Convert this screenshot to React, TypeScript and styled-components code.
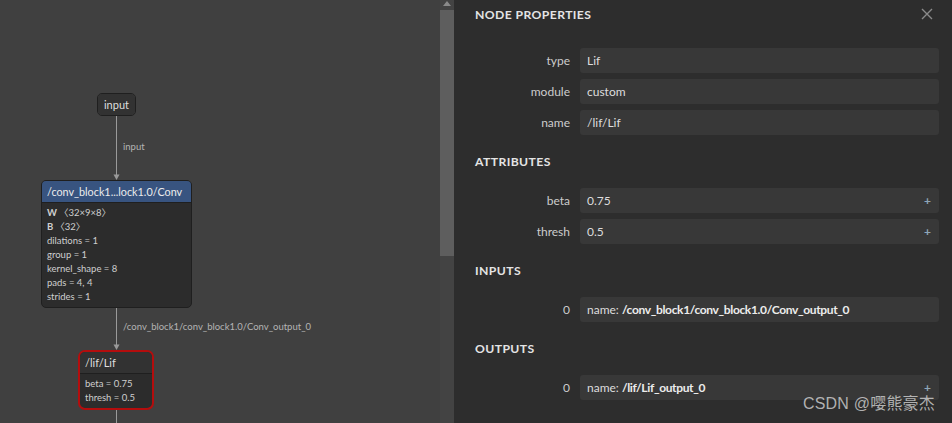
import React from "react";
import styled, { createGlobalStyle } from "styled-components";

const Global = createGlobalStyle`
  html, body { margin: 0; padding: 0; background: #2d2d2d; }
  body { font-family: Lato, "Noto Sans CJK SC", sans-serif; }
  * { box-sizing: border-box; }
`;

const Root = styled.div`
  display: flex;
  width: 952px;
  height: 423px;
  overflow: hidden;
  position: relative;
`;

const Canvas = styled.div`
  position: relative;
  flex: 0 0 440px;
  height: 100%;
  background: #404040;
`;

const Edges = styled.svg`
  position: absolute;
  left: 0;
  top: 0;
`;

const Node = styled.div<{ $x: number; $y: number; $w: number; $selected?: boolean }>`
  position: absolute;
  left: ${(p) => p.$x}px;
  top: ${(p) => p.$y}px;
  width: ${(p) => p.$w}px;
  border: ${(p) => (p.$selected ? "2px solid #b40d0d" : "1px solid #1f1f1f")};
  border-radius: ${(p) => (p.$selected ? 7 : 5)}px;
  overflow: hidden;
  background: #2c2c2c;
  color: #dcdcdc;
`;

const NodeHeader = styled.div<{ $kind: "layer" | "plain" | "input" }>`
  height: ${(p) => (p.$kind === "input" ? 21 : 22)}px;
  display: flex;
  align-items: center;
  justify-content: ${(p) => (p.$kind === "input" ? "center" : "flex-start")};
  padding: 0 ${(p) => (p.$kind === "input" ? 0 : 5)}px;
  font-size: ${(p) => (p.$kind === "layer" ? 10.8 : 11)}px;
  background: ${(p) => (p.$kind === "layer" ? "#385480" : "#323232")};
  color: ${(p) => (p.$kind === "layer" ? "#ececec" : "#dedede")};
  border-bottom: ${(p) => (p.$kind === "input" ? "none" : "1px solid #1f1f1f")};
  white-space: nowrap;
`;

const NodeBody = styled.div`
  display: flex;
  flex-direction: column;
  padding: 3px 5px 3px 5px;
`;

const NodeAttr = styled.div`
  height: 14px;
  line-height: 14px;
  font-size: 9.5px;
  color: #cfcfcf;
  white-space: nowrap;
`;

const AttrKey = styled.b`
  font-weight: 700;
  margin-right: 2px;
`;

const EdgeLabel = styled.div<{ $x: number; $y: number }>`
  position: absolute;
  left: ${(p) => p.$x}px;
  top: ${(p) => p.$y}px;
  font-size: 9.5px;
  color: #b4b4b4;
  white-space: nowrap;
`;

const ScrollTrack = styled.div`
  flex: 0 0 14px;
  height: 100%;
  background: #434343;
  display: flex;
  flex-direction: column;
  align-items: stretch;
`;

const ScrollArrow = styled.div`
  height: 10px;
  display: flex;
  justify-content: center;
  padding-top: 1px;
`;

const ScrollThumb = styled.div`
  height: 246px;
  background: #5e5e5e;
`;

const Panel = styled.div`
  flex: 1;
  height: 100%;
  background: #2d2d2d;
  padding: 0 13px 0 21px;
  display: flex;
  flex-direction: column;
  color: #d6d6d6;
`;

const TitleBar = styled.div`
  height: 28px;
  display: flex;
  align-items: center;
  justify-content: space-between;
  margin-bottom: 20px;
`;

const Heading = styled.div<{ $gapTop?: number; $gapBottom?: number }>`
  height: 20px;
  display: flex;
  align-items: center;
  font-size: 12.2px;
  font-weight: 700;
  color: #e4e4e4;
  letter-spacing: 0.4px;
  margin-top: ${(p) => p.$gapTop ?? 16}px;
  margin-bottom: ${(p) => p.$gapBottom ?? 17}px;
`;

const Close = styled.button`
  background: none;
  border: none;
  padding: 0;
  margin-right: 6px;
  display: flex;
  cursor: pointer;
`;

const Rows = styled.div`
  display: flex;
  flex-direction: column;
  gap: 6px;
`;

const Row = styled.div`
  display: grid;
  grid-template-columns: 95px 1fr;
  column-gap: 10px;
  align-items: center;
`;

const Label = styled.div`
  text-align: right;
  font-size: 12px;
  color: #cccccc;
`;

const Value = styled.div`
  height: 25px;
  background: #383838;
  border-radius: 3px;
  display: flex;
  align-items: center;
  justify-content: space-between;
  padding: 0 8px 0 7px;
  font-size: 12px;
  color: #dddddd;
  white-space: nowrap;
`;

const Strong = styled.b`
  font-weight: 700;
  color: #ececec;
  letter-spacing: -0.35px;
`;

const Plus = styled.span`
  font-size: 12px;
  color: #8fa6b8;
  font-weight: 700;
`;

const Watermark = styled.div`
  position: absolute;
  right: 17px;
  bottom: 9px;
  font-family: "Liberation Sans", "Noto Sans CJK SC", sans-serif;
  font-size: 16px;
  color: rgba(215, 215, 215, 0.78);
  letter-spacing: 0.2px;
`;

type Prop = { label: string; value: React.ReactNode; expand?: boolean };

const PropRow = ({ label, value, expand }: Prop) => (
  <Row>
    <Label>{label}</Label>
    <Value>
      <span>{value}</span>
      {expand && <Plus>+</Plus>}
    </Value>
  </Row>
);

export default function App() {
  return (
    <Root>
      <Global />
      <Canvas>
        <Edges width={440} height={423}>
          <g stroke="#9a9a9a" strokeWidth={1} fill="none">
            <line x1={116.5} y1={116} x2={116.5} y2={176} />
            <line x1={116.5} y1={307} x2={116.5} y2={346} />
            <line x1={116.5} y1={408} x2={116.5} y2={423} />
          </g>
          <g fill="#9a9a9a">
            <path d="M113.5 174.5 L119.5 174.5 L116.5 180 Z" />
            <path d="M113.5 344.5 L119.5 344.5 L116.5 350 Z" />
          </g>
        </Edges>

        <Node $x={97} $y={93} $w={39}>
          <NodeHeader $kind="input">input</NodeHeader>
        </Node>
        <EdgeLabel $x={123} $y={141}>input</EdgeLabel>

        <Node $x={41} $y={180} $w={151}>
          <NodeHeader $kind="layer">/conv_block1...lock1.0/Conv</NodeHeader>
          <NodeBody>
            <NodeAttr>
              <AttrKey>W</AttrKey>〈32×9×8〉
            </NodeAttr>
            <NodeAttr>
              <AttrKey>B</AttrKey>〈32〉
            </NodeAttr>
            <NodeAttr>dilations = 1</NodeAttr>
            <NodeAttr>group = 1</NodeAttr>
            <NodeAttr>kernel_shape = 8</NodeAttr>
            <NodeAttr>pads = 4, 4</NodeAttr>
            <NodeAttr>strides = 1</NodeAttr>
          </NodeBody>
        </Node>
        <EdgeLabel $x={123} $y={321}>/conv_block1/conv_block1.0/Conv_output_0</EdgeLabel>

        <Node $x={78} $y={350} $w={76} $selected>
          <NodeHeader $kind="plain">/lif/Lif</NodeHeader>
          <NodeBody>
            <NodeAttr>beta = 0.75</NodeAttr>
            <NodeAttr>thresh = 0.5</NodeAttr>
          </NodeBody>
        </Node>
      </Canvas>

      <ScrollTrack>
        <ScrollArrow>
          <svg width="8" height="5" viewBox="0 0 8 5">
            <path d="M0 5 L4 0 L8 5 Z" fill="#8a8a8a" />
          </svg>
        </ScrollArrow>
        <ScrollThumb />
      </ScrollTrack>

      <Panel>
        <TitleBar>
          <Heading $gapTop={0} $gapBottom={0}>
            NODE PROPERTIES
          </Heading>
          <Close aria-label="close">
            <svg width="12" height="12" viewBox="0 0 12 12">
              <path d="M1 1 L11 11 M11 1 L1 11" stroke="#8a8a8a" strokeWidth="1.4" />
            </svg>
          </Close>
        </TitleBar>
        <Rows>
          <PropRow label="type" value="Lif" />
          <PropRow label="module" value="custom" />
          <PropRow label="name" value="/lif/Lif" />
        </Rows>

        <Heading>ATTRIBUTES</Heading>
        <Rows>
          <PropRow label="beta" value="0.75" expand />
          <PropRow label="thresh" value="0.5" expand />
        </Rows>

        <Heading>INPUTS</Heading>
        <Rows>
          <PropRow
            label="0"
            value={
              <>
                name: <Strong>/conv_block1/conv_block1.0/Conv_output_0</Strong>
              </>
            }
          />
        </Rows>

        <Heading>OUTPUTS</Heading>
        <Rows>
          <PropRow
            label="0"
            value={
              <>
                name: <Strong>/lif/Lif_output_0</Strong>
              </>
            }
            expand
          />
        </Rows>
      </Panel>
      <Watermark>CSDN @嘤熊豪杰</Watermark>
    </Root>
  );
}
